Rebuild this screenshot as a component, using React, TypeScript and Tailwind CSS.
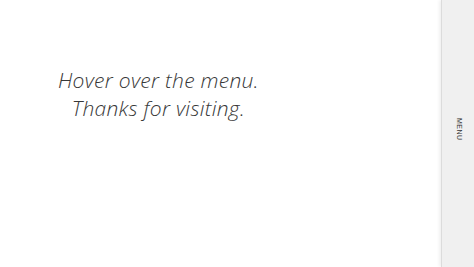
export default function App() {
  return (
    <div className="flex h-[267px] w-[474px] bg-white overflow-hidden">
      <main className="flex-1 pt-[66px] pl-[58px]">
        <p
          className="inline-block text-center text-[21px] leading-[28px] tracking-[0.3px] italic font-light text-[#383838]"
          style={{ fontFamily: '"Open Sans", Lato, sans-serif' }}
        >
          Hover over the menu.
          <br />
          Thanks for visiting.
        </p>
      </main>
      <aside className="w-[33px] h-full bg-[#f0f0f0] border-l border-[#dcdcdc] shadow-[-2px_0_3px_rgba(0,0,0,0.06)] flex items-center justify-center">
        <span
          className="text-[7px] tracking-[0.5px] text-[#333] rotate-90 -translate-y-[4px]"
          style={{ fontFamily: '"Liberation Sans", Arial, sans-serif' }}
        >
          MENU
        </span>
      </aside>
    </div>
  );
}
